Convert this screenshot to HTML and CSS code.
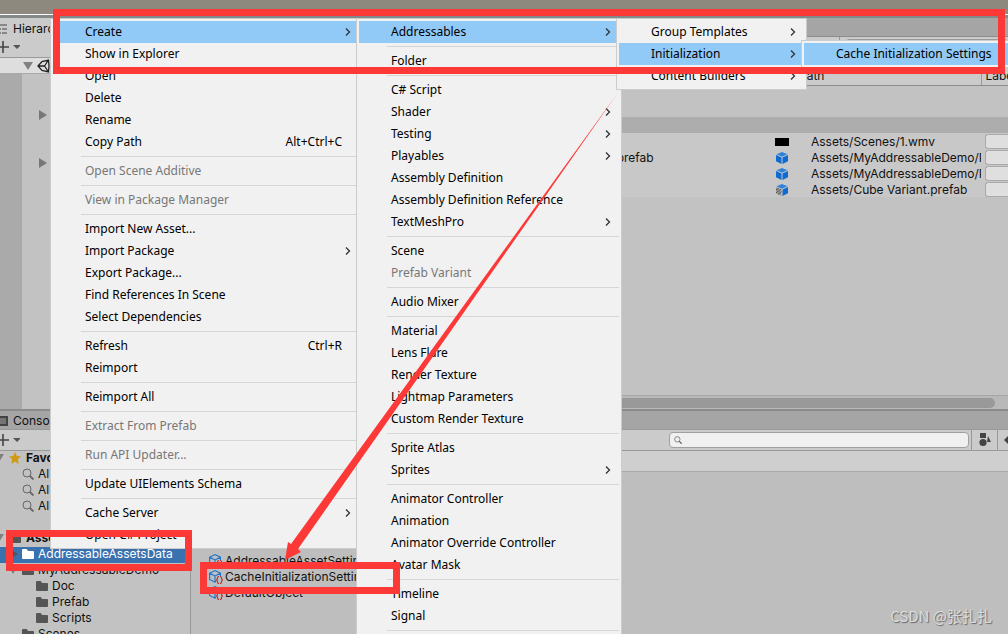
FILE: index.html
```html
<!DOCTYPE html>
<html lang="en">
<head>
    <meta charset="UTF-8">
    <meta name="viewport" content="width=device-width, initial-scale=1.0">
    <title>Addressables - Cache Initialization Settings</title>
    <link rel="stylesheet" href="styles.css">
</head>
<body>
    <!-- shared icons -->
    <svg class="defs" aria-hidden="true">
        <symbol id="chevron" viewBox="0 0 6 8"><path d="M1 .5L4.500 4 1 7.500" fill="none" stroke="#333" stroke-width="1.300"/></symbol>
        <symbol id="folder" viewBox="0 0 12 10"><path d="M0 1q0-1 1-1h3q1 0 1.500 1l.5 1h5q1 0 1 1v6q0 1-1 1h-10q-1 0-1-1z" fill="currentColor"/></symbol>
        <symbol id="search" viewBox="0 0 12 12"><circle cx="5" cy="5" r="4" fill="none" stroke="currentColor"/><path d="M8 8l3.500 3.500" stroke="currentColor" stroke-width="1.800"/></symbol>
        <symbol id="plus" viewBox="0 0 20 12"><path d="M3 0v12M-3 6H9" stroke="#444" stroke-width="1.600"/><path d="M13 4h8l-4 4z" fill="#555"/></symbol>
        <symbol id="cube" viewBox="0 0 12 12"><path d="M6 0l5.500 2.300L6 4.800.5 2.300z" fill="#2f83dc"/><path d="M0 3l5.500 2.500V12L0 9.300z" fill="#0f6bd0"/><path d="M12 3L6.500 5.500V12L12 9.300z" fill="#0f6bd0"/></symbol>
        <symbol id="variant" viewBox="0 0 12 12"><path d="M6 0l5.500 2.300L6 4.800.5 2.300z" fill="#2f83dc"/><path d="M0 3l5.500 2.500V12L0 9.300z" fill="#999"/><path d="M0 6l3-2M0 9l5-4M2 10.500l3.500-3" stroke="#444" stroke-width=".8"/><path d="M12 3L6.500 5.500V12L12 9.300z" fill="#0f6bd0"/></symbol>
        <symbol id="asset" viewBox="0 0 14 14"><path d="M.6 3.200L6 .6l5.400 2.600v6L6 12.200.6 9.400zM.6 3.200L6 6l5.400-2.800M6 6v6" fill="none" stroke="#1c74cf" stroke-width="1.100"/><path d="M7 6h7v8H7z" fill="#bebebe"/><path d="M10 6.500q-1.500 0-1.500 1.500t-1 2q1 .5 1 2t1.500 1.500M11 6.500q1.500 0 1.500 1.500t1 2q-1 .5-1 2T11 13.500" fill="none" stroke="#b3282d" stroke-width="1.100"/></symbol>
    </svg>

    <div class="titlebar"></div>

    <div class="upper">
        <section class="hierarchy">
            <div class="tab">
                <svg width="8" height="10" viewBox="0 0 8 10"><path d="M0 1h7M2 5h5M2 9h5M0 5h1M0 9h1" stroke="#444"/></svg>
                Hierarchy
            </div>
            <div class="toolbar"><svg width="20" height="12"><use href="#plus"/></svg></div>
            <div class="scene">
                <span class="arrow-down"></span>
                <svg width="13" height="14" viewBox="0 0 13 14"><path d="M1 7l4-4.500L11.500 1l.5 6-.5 6L5 11.500zM1 7h6.500M7.500 7l4-6M7.500 7l4 6" fill="none" stroke="#222" stroke-width="1.300"/></svg>
            </div>
            <div class="objects">
                <span class="arrow-right"></span>
                <span class="arrow-right"></span>
            </div>
        </section>

        <section class="groups">
            <div class="tabstrip"></div>
            <div class="groups-toolbar"><span></span><span class="field"></span></div>
            <table>
                <colgroup><col><col class="col-icon"><col class="col-path"><col class="col-labels"></colgroup>
                <thead>
                    <tr><th></th><th></th><th>Path</th><th>Labels</th></tr>
                </thead>
                <tbody>
                    <tr><td colspan="4"></td></tr>
                    <tr><td colspan="4"></td></tr>
                    <tr class="group"><td colspan="4"></td></tr>
                    <tr class="entry"><td></td><td><span class="video"></span></td><td>Assets/Scenes/1.wmv</td><td><button class="labels" aria-label="Labels"></button></td></tr>
                    <tr class="entry"><td>Cube.prefab</td><td><svg width="12" height="12"><use href="#cube"/></svg></td><td>Assets/MyAddressableDemo/Prefab</td><td><button class="labels" aria-label="Labels"></button></td></tr>
                    <tr class="entry"><td></td><td><svg width="12" height="12"><use href="#cube"/></svg></td><td>Assets/MyAddressableDemo/Prefab</td><td><button class="labels" aria-label="Labels"></button></td></tr>
                    <tr class="entry"><td></td><td><svg width="12" height="12"><use href="#variant"/></svg></td><td>Assets/Cube Variant.prefab</td><td><button class="labels" aria-label="Labels"></button></td></tr>
                </tbody>
            </table>
            <div class="scrollbar"><div class="thumb"></div></div>
        </section>
    </div>

    <div class="lower">
        <div class="lower-tabs">
            <svg width="8" height="10" viewBox="0 0 8 10"><path d="M0 0h8v10H0z" fill="#444"/><path d="M0 3h6M0 5h6M0 7h6" stroke="#a5a5a5"/></svg>
            Console
        </div>
        <div class="project-toolbar">
            <svg width="20" height="12"><use href="#plus"/></svg>
            <label class="search">
                <svg width="8" height="8"><use href="#search"/></svg>
                <input type="text" aria-label="Search">
            </label>
            <button class="tool" aria-label="Search by type"><svg width="12" height="14" viewBox="0 0 12 14"><path d="M1 0h6v5H1zM8 9l1-6 3 6z" fill="#444"/><circle cx="4" cy="9.500" r="3.600" fill="#444"/></svg></button>
            <button class="tool last" aria-label="Search by label"><svg width="12" height="12" viewBox="0 0 12 12"><path d="M0 6l4-4h8v8H4z" fill="#444"/></svg></button>
        </div>
        <div class="project">
            <ul class="tree">
                <li class="bold l0"><span class="arrow-down"></span><svg width="12" height="12" viewBox="0 0 12 12"><path d="M6 0l1.800 4 4.200.400-3.200 2.900L9.700 12 6 9.500 2.300 12l.9-4.700L0 4.400 4.200 4z" fill="#d19a12"/></svg>Favorites</li>
                <li class="l1"><svg class="glass" width="12" height="12"><use href="#search"/></svg>All Materials</li>
                <li class="l1"><svg class="glass" width="12" height="12"><use href="#search"/></svg>All Models</li>
                <li class="l1"><svg class="glass" width="12" height="12"><use href="#search"/></svg>All Prefabs</li>
                <li></li>
                <li class="bold l0"><span class="arrow-down"></span><svg width="12" height="10"><use href="#folder"/></svg>Assets</li>
                <li class="l1 selected"><span class="arrow-right"></span><svg width="12" height="10"><use href="#folder"/></svg>AddressableAssetsData</li>
                <li class="l1"><span class="arrow-down"></span><svg width="12" height="10"><use href="#folder"/></svg>MyAddressableDemo</li>
                <li class="l2"><svg width="12" height="10"><use href="#folder"/></svg>Doc</li>
                <li class="l2"><svg width="12" height="10"><use href="#folder"/></svg>Prefab</li>
                <li class="l2"><svg width="12" height="10"><use href="#folder"/></svg>Scripts</li>
                <li class="l1"><svg width="12" height="10"><use href="#folder"/></svg>Scenes</li>
            </ul>
            <div class="content">
                <div class="breadcrumb"></div>
                <ul class="files">
                    <li><svg width="14" height="14"><use href="#asset"/></svg>AddressableAssetSettings</li>
                    <li><svg width="14" height="14"><use href="#asset"/></svg>CacheInitializationSettings</li>
                    <li><svg width="14" height="14"><use href="#asset"/></svg>DefaultObject</li>
                </ul>
            </div>
        </div>
    </div>

    <!-- context menus -->
    <div class="menu menu-assets">
        <button class="active">Create<svg width="6" height="8"><use href="#chevron"/></svg></button>
        <button>Show in Explorer</button>
        <button>Open</button>
        <button>Delete</button>
        <button>Rename</button>
        <button>Copy Path<kbd>Alt+Ctrl+C</kbd></button>
        <hr>
        <button disabled>Open Scene Additive</button>
        <hr>
        <button disabled>View in Package Manager</button>
        <hr>
        <button>Import New Asset...</button>
        <button>Import Package<svg width="6" height="8"><use href="#chevron"/></svg></button>
        <button>Export Package...</button>
        <button>Find References In Scene</button>
        <button>Select Dependencies</button>
        <hr>
        <button>Refresh<kbd>Ctrl+R</kbd></button>
        <button>Reimport</button>
        <hr>
        <button>Reimport All</button>
        <hr>
        <button disabled>Extract From Prefab</button>
        <hr>
        <button disabled>Run API Updater...</button>
        <hr>
        <button>Update UIElements Schema</button>
        <hr>
        <button>Cache Server<svg width="6" height="8"><use href="#chevron"/></svg></button>
        <button>Open C# Project</button>
    </div>

    <div class="menu menu-create">
        <button class="active">Addressables<svg width="6" height="8"><use href="#chevron"/></svg></button>
        <hr>
        <button>Folder</button>
        <hr>
        <button>C# Script</button>
        <button>Shader<svg width="6" height="8"><use href="#chevron"/></svg></button>
        <button>Testing<svg width="6" height="8"><use href="#chevron"/></svg></button>
        <button>Playables<svg width="6" height="8"><use href="#chevron"/></svg></button>
        <button>Assembly Definition</button>
        <button>Assembly Definition Reference</button>
        <button>TextMeshPro<svg width="6" height="8"><use href="#chevron"/></svg></button>
        <hr>
        <button>Scene</button>
        <button disabled>Prefab Variant</button>
        <hr>
        <button>Audio Mixer</button>
        <hr>
        <button>Material</button>
        <button>Lens Flare</button>
        <button>Render Texture</button>
        <button>Lightmap Parameters</button>
        <button>Custom Render Texture</button>
        <hr>
        <button>Sprite Atlas</button>
        <button>Sprites<svg width="6" height="8"><use href="#chevron"/></svg></button>
        <hr>
        <button>Animator Controller</button>
        <button>Animation</button>
        <button>Animator Override Controller</button>
        <button>Avatar Mask</button>
        <hr>
        <button>Timeline</button>
        <button>Signal</button>
        <hr>
    </div>

    <div class="menu menu-addressables">
        <button>Group Templates<svg width="6" height="8"><use href="#chevron"/></svg></button>
        <button class="active">Initialization<svg width="6" height="8"><use href="#chevron"/></svg></button>
        <button>Content Builders<svg width="6" height="8"><use href="#chevron"/></svg></button>
    </div>

    <div class="menu menu-init">
        <button class="active">Cache Initialization Settings</button>
    </div>

    <!-- red markers -->
    <div class="mark mark-path"></div>
    <div class="mark mark-folder"></div>
    <div class="mark mark-file"></div>
    <svg class="pointer" width="332" height="466" viewBox="285 94 332 466"><path d="M617 94L298 549l3 3-16 8 3-18 3 2z" fill="#fd3937"/></svg>

    <div class="watermark">CSDN @张扎扎</div>
</body>
</html>
```
FILE: styles.css
```css
* { box-sizing: border-box; }
body { margin: 0; height: 100vh; overflow: hidden; position: relative; display: flex; flex-direction: column; background: #c2c2c2; color: #111; font: 12px/16px Inter, "Liberation Sans", sans-serif; }
ul { list-style: none; margin: 0; padding: 0; }
button { font: inherit; color: inherit; border: 0; padding: 0; background: none; }
svg { flex: none; }
.defs { position: absolute; width: 0; height: 0; }

.titlebar { flex: none; height: 18px; background: #8d897e; border-bottom: 3px solid #858888; box-shadow: inset 0 -1px #fff; }

.arrow-down { flex: none; border: 5px solid transparent; border-top: 8px solid #808080; border-bottom: 0; }
.arrow-right { flex: none; border: 5px solid transparent; border-left: 8px solid #777; border-right: 0; }

/* upper windows */
.upper { flex: 1; min-height: 0; display: flex; }
.hierarchy { width: 300px; display: flex; flex-direction: column; }
.tab { height: 21px; display: flex; align-items: center; gap: 5px; background: #cbcbcb; }
.toolbar { height: 19px; padding-top: 2px; background: #cbcbcb; border-bottom: 1px solid #999; }
.scene { height: 16px; display: flex; align-items: center; gap: 4px; padding-left: 23px; background: #dedede; border-bottom: 1px solid #aaa; }
.objects { flex: 1; display: flex; flex-direction: column; gap: 38px; padding: 36px 0 0 17px; border-left: 22px solid #aaa; background: #c2c2c2; }

.groups { flex: 1; min-width: 0; display: flex; flex-direction: column; background: #c2c2c2; }
.tabstrip { height: 19px; background: #a5a5a5; border-bottom: 1px solid #8c8c8c; }
.groups-toolbar { height: 31px; display: flex; justify-content: flex-end; gap: 6px; background: #cbcbcb; }
.groups-toolbar span { width: 1px; background: #999; }
.groups-toolbar .field { width: 162px; height: 18px; margin-top: 2px; border: 1px solid #999; border-radius: 3px; background: #eee; }
table { width: 100%; table-layout: fixed; border-collapse: collapse; }
.col-icon { width: 24px; }
.col-path { width: 187px; }
.col-labels { width: 27px; }
th { height: 17px; padding: 0 0 0 5px; background: #cbcbcb; border-bottom: 1px solid #8c8c8c; font-weight: normal; text-align: left; white-space: nowrap; overflow: hidden; line-height: 14px; }
th:last-child { border-left: 1px solid #999; padding-left: 4px; }
td { height: 16px; padding: 0; white-space: nowrap; overflow: hidden; }
.group { background: #adadad; }
.entry { background: #c8c8c8; }
.entry td { padding-top: 1px; line-height: 15px; }
.entry td:first-child { padding-left: 283px; }
.entry td:nth-child(2) { text-align: center; line-height: 0; }
.entry td:nth-child(3) { padding-left: 17px; }
.entry td:last-child { padding-left: 4px; }
.video { display: inline-block; width: 14px; height: 8px; background: #000; }
.labels { display: block; width: 100%; height: 15px; background: #dfdfdf; border: 1px solid #aaa; border-right: 0; border-radius: 3px 0 0 3px; }
.scrollbar { height: 14px; margin-top: auto; padding: 2px 13px 1px 0; background: #b8b8b8; border-top: 1px solid #a5a5a5; }
.thumb { height: 10px; border-radius: 5px; background: #999; }

/* project window */
.lower { flex: none; height: 225px; display: flex; flex-direction: column; border-top: 2px solid #8a8a8a; }
.lower-tabs { height: 19px; display: flex; align-items: center; gap: 5px; padding-top: 2px; background: #a5a5a5; border-bottom: 1px solid #999; }
.project-toolbar { height: 21px; display: flex; align-items: center; background: #cbcbcb; border-bottom: 1px solid #999; }
.search { display: flex; align-items: center; width: 300px; height: 16px; margin: 0 2px 0 auto; padding-left: 4px; background: #f0f0f0; border: 1px solid #a0a0a0; border-radius: 4px; color: #555; }
.search input { flex: 1; min-width: 0; border: 0; background: none; outline: 0; }
.tool { width: 26px; height: 20px; display: grid; place-items: center; border-left: 1px solid #999; }
.tool.last { width: 11px; overflow: hidden; justify-content: start; padding-left: 6px; }
.project { flex: 1; min-height: 0; display: flex; }
.tree { width: 191px; overflow: hidden; border-right: 1px solid #999; }
.tree li, .files li { height: 16px; display: flex; align-items: center; gap: 4px; white-space: nowrap; }
.tree li { padding-bottom: 2px; }
.tree svg { color: #555; }
.tree .glass { color: #666; }
.tree .l0 { padding-left: 8px; gap: 5px; }
.tree .l1 { padding-left: 22px; }
.tree .l2 { padding-left: 36px; }
.tree .arrow-down { margin-left: -14px; }
.tree .arrow-right { margin-left: -12px; }
.tree .bold { font-weight: bold; }
.tree .selected { background: #3a72b0; color: #fff; }
.tree .selected svg { color: #fff; }
.tree .selected .arrow-right { border-left-color: #555; }
.content { flex: 1; min-width: 0; background: #bebebe; }
.breadcrumb { height: 21px; background: #cfcfcf; border-bottom: 1px solid #aaa; }
.files { padding: 81px 0 0 18px; }
.files li { gap: 2px; }

/* menus lie over the windows */
.menu { position: absolute; padding: 2px; background: #f1f1f1; border: 1px solid #ccc; font: 12px/22px "Noto Sans", "Open Sans", sans-serif; color: #000; }
.menu button { display: flex; align-items: center; width: 100%; height: 22px; padding: 0 8px 0 32px; text-align: left; white-space: nowrap; }
.menu svg { margin-left: auto; }
.menu kbd { margin-left: auto; padding-right: 9px; font: inherit; }
.menu .active { background: #91c9f7; }
.menu button:disabled { color: #777; }
.menu hr { height: 1px; margin: 3px 0 3px 28px; border: 0; background: #d5d5d5; }
.menu-assets { left: 50px; top: 18px; width: 312px; }
.menu-create { left: 356px; top: 18px; width: 266px; }
.menu-addressables { left: 616px; top: 18px; width: 191px; }
.menu-init { left: 801px; top: 40px; width: 230px; }

.mark { position: absolute; border: 7px solid #fd3937; }
.mark-path { left: 53px; right: 3px; top: 9px; height: 65px; }
.mark-folder { left: 6px; top: 530px; width: 186px; height: 41px; }
.mark-file { left: 200px; top: 562px; width: 200px; height: 32px; }
.pointer { position: absolute; left: 285px; top: 94px; }

.watermark { position: absolute; right: 16px; bottom: 7px; font: 15px/22px "Noto Sans CJK SC", sans-serif; color: #dcdcdc; text-shadow: 1px 1px 1px #666; }
```
